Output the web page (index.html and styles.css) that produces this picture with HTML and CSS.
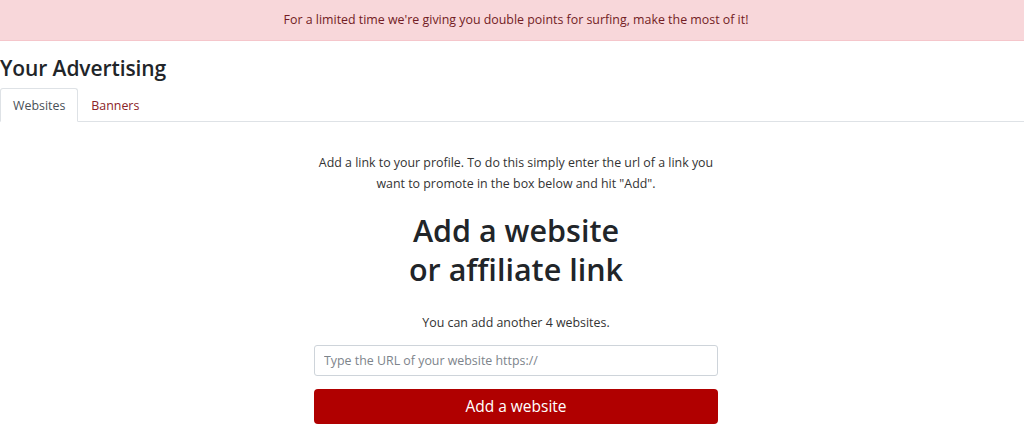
FILE: index.html
```html
<!DOCTYPE html>
<html lang="en">
<head>
    <meta charset="UTF-8">
    <meta name="viewport" content="width=device-width, initial-scale=1.0">
    <title>Your Advertising</title>
    <link rel="stylesheet" href="styles.css">
</head>
<body>
    <div class="alert">
        For a limited time we're giving you double points for surfing, make the most of it!
    </div>

    <h3 class="page-title">Your Advertising</h3>

    <ul class="tabs">
        <li><a href="#" class="tab active">Websites</a></li>
        <li><a href="#" class="tab">Banners</a></li>
    </ul>

    <div class="tab-content">
        <div class="add-box">
            <p class="intro">Add a link to your profile. To do this simply enter the url of a link you want to promote in the box below and hit "Add".</p>
            <h1 class="add-title">Add a website<br>or affiliate link</h1>
            <p class="remaining">You can add another 4 websites.</p>
            <form class="add-form">
                <input type="url" class="form-control" placeholder="Type the URL of your website https://">
                <button type="submit" class="btn-add">Add a website</button>
            </form>
        </div>
    </div>
</body>
</html>
```

FILE: styles.css
```css
* {
    margin: 0;
    padding: 0;
    box-sizing: border-box;
}

body {
    font-family: 'Open Sans', 'Noto Sans', sans-serif;
    font-size: 12.4px;
    line-height: 1.5;
    color: #212529;
    background-color: #fff;
}

.alert {
    height: 41px;
    display: flex;
    align-items: center;
    justify-content: center;
    padding-left: 8px;
    background-color: #f8d7da;
    border-bottom: 1px solid #f5c6cb;
    color: #721c24;
    font-size: 12.4px;
}

.page-title {
    font-size: 21px;
    font-weight: 600;
    line-height: 1.2;
    margin-top: 15px;
    margin-bottom: 7px;
    letter-spacing: -0.1px;
}

.tabs {
    list-style: none;
    display: flex;
    border-bottom: 1px solid #dee2e6;
}

.tab {
    display: block;
    padding: 8px 12px 7px;
    height: 34px;
    border: 1px solid transparent;
    border-top-left-radius: 3px;
    border-top-right-radius: 3px;
    margin-bottom: -1px;
    color: #8b2327;
    text-decoration: none;
}

.tab.active {
    color: #495057;
    background-color: #fff;
    border-color: #dee2e6 #dee2e6 #fff;
}

.tab-content {
    display: flex;
    justify-content: center;
    padding-left: 8px;
}

.add-box {
    width: 404px;
    text-align: center;
    padding-top: 30px;
}

.intro {
    color: #333;
    line-height: 21px;
}

.add-title {
    font-size: 30.5px;
    font-weight: 600;
    line-height: 39px;
    margin-top: 17px;
}

.remaining {
    color: #333;
    margin-top: 25px;
}

.add-form {
    margin-top: 12px;
    display: flex;
    flex-direction: column;
    gap: 13px;
}

.form-control {
    height: 31px;
    padding: 0 9px;
    border: 1px solid #ced4da;
    border-radius: 3px;
    font-family: inherit;
    font-size: 12.4px;
    color: #495057;
}

.form-control::placeholder {
    color: #7d848b;
}

.btn-add {
    height: 35px;
    border: none;
    border-radius: 4px;
    background-color: #b00000;
    color: #fff;
    font-family: inherit;
    font-size: 15.5px;
    cursor: pointer;
}
```
